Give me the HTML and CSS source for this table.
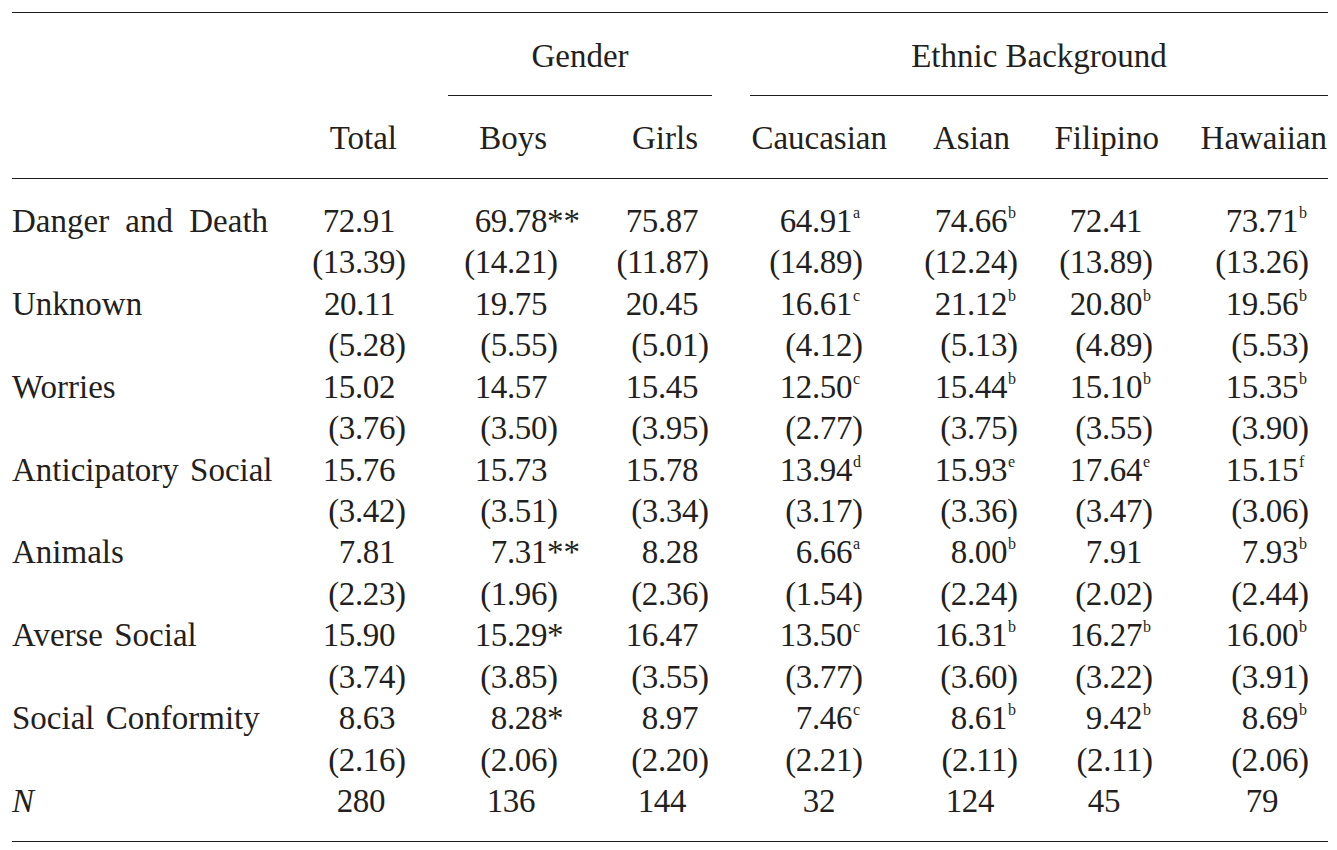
FILE: index.html
```html
<!DOCTYPE html>
<html lang="en">
<head>
<meta charset="utf-8">
<title>Fear scores by gender and ethnic background</title>
<link rel="stylesheet" href="styles.css">
</head>
<body>
<div class="table">
  <div class="groups">
    <div class="group gender">Gender</div>
    <div class="group ethnic">Ethnic Background</div>
  </div>
  <div class="grid head">
    <div class="lab"></div>
    <div class="hc">Total</div>
    <div class="hc">Boys</div>
    <div class="hc">Girls</div>
    <div class="hc">Caucasian</div>
    <div class="hc">Asian</div>
    <div class="hc">Filipino</div>
    <div class="hc last">Hawaiian</div>
  </div>
  <div class="grid body">
    <div class="lab wide">Danger and Death</div>
    <div class="n c1">72.91</div>
    <div class="n c2">69.78<span class="h">**</span></div>
    <div class="n c3">75.87</div>
    <div class="n c4">64.91<span class="h"><sup>a</sup></span></div>
    <div class="n c5">74.66<span class="h"><sup>b</sup></span></div>
    <div class="n c6">72.41</div>
    <div class="n c7">73.71<span class="h"><sup>b</sup></span></div>

    <div class="lab"></div>
    <div class="n c1">(13.39<span class="h">)</span></div>
    <div class="n c2">(14.21<span class="h">)</span></div>
    <div class="n c3">(11.87<span class="h">)</span></div>
    <div class="n c4">(14.89<span class="h">)</span></div>
    <div class="n c5">(12.24<span class="h">)</span></div>
    <div class="n c6">(13.89<span class="h">)</span></div>
    <div class="n c7">(13.26<span class="h">)</span></div>

    <div class="lab">Unknown</div>
    <div class="n c1">20.11</div>
    <div class="n c2">19.75</div>
    <div class="n c3">20.45</div>
    <div class="n c4">16.61<span class="h"><sup>c</sup></span></div>
    <div class="n c5">21.12<span class="h"><sup>b</sup></span></div>
    <div class="n c6">20.80<span class="h"><sup>b</sup></span></div>
    <div class="n c7">19.56<span class="h"><sup>b</sup></span></div>

    <div class="lab"></div>
    <div class="n c1">(5.28<span class="h">)</span></div>
    <div class="n c2">(5.55<span class="h">)</span></div>
    <div class="n c3">(5.01<span class="h">)</span></div>
    <div class="n c4">(4.12<span class="h">)</span></div>
    <div class="n c5">(5.13<span class="h">)</span></div>
    <div class="n c6">(4.89<span class="h">)</span></div>
    <div class="n c7">(5.53<span class="h">)</span></div>

    <div class="lab">Worries</div>
    <div class="n c1">15.02</div>
    <div class="n c2">14.57</div>
    <div class="n c3">15.45</div>
    <div class="n c4">12.50<span class="h"><sup>c</sup></span></div>
    <div class="n c5">15.44<span class="h"><sup>b</sup></span></div>
    <div class="n c6">15.10<span class="h"><sup>b</sup></span></div>
    <div class="n c7">15.35<span class="h"><sup>b</sup></span></div>

    <div class="lab"></div>
    <div class="n c1">(3.76<span class="h">)</span></div>
    <div class="n c2">(3.50<span class="h">)</span></div>
    <div class="n c3">(3.95<span class="h">)</span></div>
    <div class="n c4">(2.77<span class="h">)</span></div>
    <div class="n c5">(3.75<span class="h">)</span></div>
    <div class="n c6">(3.55<span class="h">)</span></div>
    <div class="n c7">(3.90<span class="h">)</span></div>

    <div class="lab">Anticipatory Social</div>
    <div class="n c1">15.76</div>
    <div class="n c2">15.73</div>
    <div class="n c3">15.78</div>
    <div class="n c4">13.94<span class="h"><sup>d</sup></span></div>
    <div class="n c5">15.93<span class="h"><sup>e</sup></span></div>
    <div class="n c6">17.64<span class="h"><sup>e</sup></span></div>
    <div class="n c7">15.15<span class="h"><sup>f</sup></span></div>

    <div class="lab"></div>
    <div class="n c1">(3.42<span class="h">)</span></div>
    <div class="n c2">(3.51<span class="h">)</span></div>
    <div class="n c3">(3.34<span class="h">)</span></div>
    <div class="n c4">(3.17<span class="h">)</span></div>
    <div class="n c5">(3.36<span class="h">)</span></div>
    <div class="n c6">(3.47<span class="h">)</span></div>
    <div class="n c7">(3.06<span class="h">)</span></div>

    <div class="lab">Animals</div>
    <div class="n c1">7.81</div>
    <div class="n c2">7.31<span class="h">**</span></div>
    <div class="n c3">8.28</div>
    <div class="n c4">6.66<span class="h"><sup>a</sup></span></div>
    <div class="n c5">8.00<span class="h"><sup>b</sup></span></div>
    <div class="n c6">7.91</div>
    <div class="n c7">7.93<span class="h"><sup>b</sup></span></div>

    <div class="lab"></div>
    <div class="n c1">(2.23<span class="h">)</span></div>
    <div class="n c2">(1.96<span class="h">)</span></div>
    <div class="n c3">(2.36<span class="h">)</span></div>
    <div class="n c4">(1.54<span class="h">)</span></div>
    <div class="n c5">(2.24<span class="h">)</span></div>
    <div class="n c6">(2.02<span class="h">)</span></div>
    <div class="n c7">(2.44<span class="h">)</span></div>

    <div class="lab">Averse Social</div>
    <div class="n c1">15.90</div>
    <div class="n c2">15.29<span class="h">*</span></div>
    <div class="n c3">16.47</div>
    <div class="n c4">13.50<span class="h"><sup>c</sup></span></div>
    <div class="n c5">16.31<span class="h"><sup>b</sup></span></div>
    <div class="n c6">16.27<span class="h"><sup>b</sup></span></div>
    <div class="n c7">16.00<span class="h"><sup>b</sup></span></div>

    <div class="lab"></div>
    <div class="n c1">(3.74<span class="h">)</span></div>
    <div class="n c2">(3.85<span class="h">)</span></div>
    <div class="n c3">(3.55<span class="h">)</span></div>
    <div class="n c4">(3.77<span class="h">)</span></div>
    <div class="n c5">(3.60<span class="h">)</span></div>
    <div class="n c6">(3.22<span class="h">)</span></div>
    <div class="n c7">(3.91<span class="h">)</span></div>

    <div class="lab">Social Conformity</div>
    <div class="n c1">8.63</div>
    <div class="n c2">8.28<span class="h">*</span></div>
    <div class="n c3">8.97</div>
    <div class="n c4">7.46<span class="h"><sup>c</sup></span></div>
    <div class="n c5">8.61<span class="h"><sup>b</sup></span></div>
    <div class="n c6">9.42<span class="h"><sup>b</sup></span></div>
    <div class="n c7">8.69<span class="h"><sup>b</sup></span></div>

    <div class="lab"></div>
    <div class="n c1">(2.16<span class="h">)</span></div>
    <div class="n c2">(2.06<span class="h">)</span></div>
    <div class="n c3">(2.20<span class="h">)</span></div>
    <div class="n c4">(2.21<span class="h">)</span></div>
    <div class="n c5">(2.11<span class="h">)</span></div>
    <div class="n c6">(2.11<span class="h">)</span></div>
    <div class="n c7">(2.06<span class="h">)</span></div>

    <div class="lab"><em>N</em></div>
    <div class="n c1 nn">280</div>
    <div class="n c2 nn">136</div>
    <div class="n c3 nn">144</div>
    <div class="n c4 nn">32</div>
    <div class="n c5 nn">124</div>
    <div class="n c6 nn">45</div>
    <div class="n c7 nn">79</div>
  </div>
</div>
</body>
</html>
```

FILE: styles.css
```css
html, body {
  margin: 0;
  padding: 0;
  background: #ffffff;
}

body {
  font-family: "Liberation Serif", Tinos, "Nimbus Roman", "DejaVu Serif", serif;
  font-size: 33px;
  line-height: 41.45px;
  color: #231f20;
}

.table {
  margin: 12px 0 0 12px;
  width: 1316px;
  border-top: 1px solid #1c1c1c;
  border-bottom: 1px solid #1c1c1c;
}

.groups {
  display: flex;
  gap: 38px;
  padding: 23px 0 0 436px;
}

.group {
  text-align: center;
  padding-bottom: 18px;
  border-bottom: 1px solid #1c1c1c;
}

.gender {
  width: 264px;
}

.ethnic {
  width: 578px;
}

.grid {
  display: grid;
  grid-template-columns: 288px 97px 150px 151px 189px 123px 149px 169px;
}

.head {
  padding: 22px 0 18px;
  border-bottom: 1px solid #1c1c1c;
}

.hc {
  text-align: right;
}

.hc.last {
  padding-right: 1px;
}

.body {
  grid-auto-rows: 41.45px;
  padding: 22px 0 19px;
}

.lab {
  word-spacing: 3px;
  white-space: nowrap;
}

.lab.wide {
  word-spacing: 8px;
}

.lab em {
  font-style: italic;
}

.n {
  text-align: right;
  white-space: nowrap;
  letter-spacing: -0.4px;
}

.c1 { padding-right: 2px; }
.c2 { padding-right: 0; }
.c3 { padding-right: 0; }
.c4 { padding-right: 35px; }
.c5 { padding-right: 3px; }
.c6 { padding-right: 17px; }
.c7 { padding-right: 30px; }

.c1.nn { padding-right: 12px; }
.c2.nn { padding-right: 12px; }
.c3.nn { padding-right: 12px; }
.c4.nn { padding-right: 52px; }
.c5.nn { padding-right: 16px; }
.c6.nn { padding-right: 39px; }
.c7.nn { padding-right: 50px; }

.h {
  display: inline-block;
  width: 0;
  text-align: left;
  white-space: nowrap;
  letter-spacing: 0;
}

.h sup {
  font-size: 16px;
  line-height: 0;
  vertical-align: 14px;
  padding-left: 1px;
}
```
